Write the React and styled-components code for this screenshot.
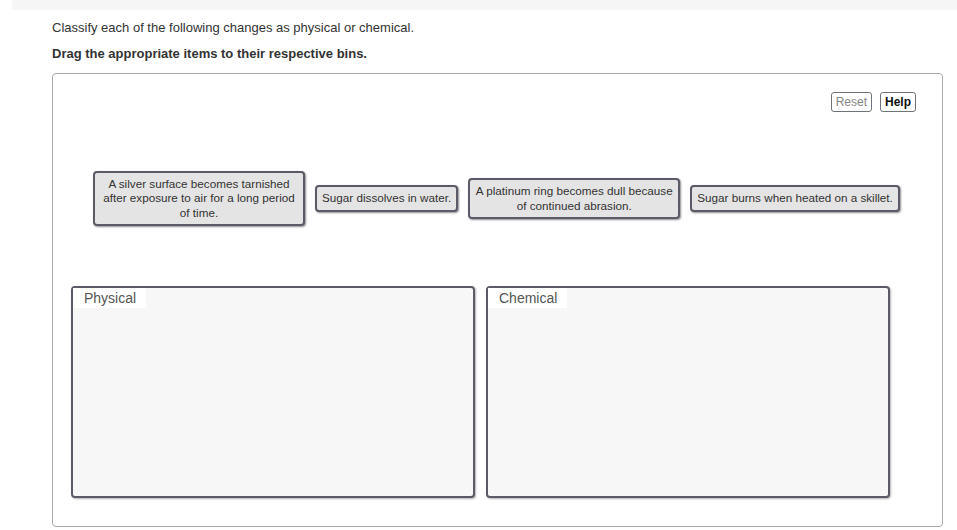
import styled, { createGlobalStyle } from "styled-components";

const GlobalStyle = createGlobalStyle`
  body {
    margin: 0;
    background: #fff;
    font-family: "Liberation Sans", Arial, sans-serif;
    color: #333;
  }
`;

const TopBar = styled.div`
  height: 10px;
  margin-left: 12px;
  background: #f6f6f6;
`;

const Content = styled.div`
  padding: 10px 14px 0 52px;
`;

const Prompt = styled.p`
  margin: 0 0 10px;
  font-size: 13px;
  line-height: 16px;
  font-weight: ${(p) => (p.$bold ? 700 : 400)};
  color: #333;
`;

const Board = styled.div`
  margin-top: 11px;
  width: 891px;
  box-sizing: border-box;
  border: 1px solid #aaa;
  border-radius: 4px;
  padding: 18px 26px 28px 18px;
`;

const ButtonBar = styled.div`
  display: flex;
  justify-content: flex-end;
  gap: 8px;
`;

const ToolButton = styled.button`
  height: 20px;
  padding: 0 4px;
  border: 1px solid #6f7478;
  border-radius: 3px;
  background: #fff;
  font-family: "Liberation Sans", Arial, sans-serif;
  font-size: 12px;
  font-weight: ${(p) => (p.$primary ? 700 : 400)};
  color: ${(p) => (p.$primary ? "#111" : "#858585")};
  cursor: pointer;
`;

const ItemTray = styled.div`
  height: 173px;
  display: flex;
  align-items: center;
  gap: 10px;
  padding-left: 22px;
`;

const Item = styled.div`
  max-width: 212px;
  box-sizing: border-box;
  padding: 4px 5px;
  border: 2px solid #5b5b68;
  border-radius: 4px;
  background: #e4e4e4;
  box-shadow: 1px 1px 2px rgba(0, 0, 0, 0.45);
  font-size: 11.7px;
  line-height: 14.5px;
  text-align: center;
  color: #333;
  cursor: move;
`;

const Bins = styled.div`
  margin-top: 1px;
  display: grid;
  grid-template-columns: 404px 404px;
  gap: 11px;
`;

const Bin = styled.div`
  height: 212px;
  box-sizing: border-box;
  border: 2px solid #5b5b68;
  border-radius: 4px;
  background: #f7f7f7;
  box-shadow: 1px 1px 2px rgba(0, 0, 0, 0.3);
`;

const BinLabel = styled.div`
  display: inline-block;
  padding: 2px 10px 2px 11px;
  background: #fff;
  font-size: 14px;
  line-height: 16px;
  color: #555;
`;

const items = [
  "A silver surface becomes tarnished after exposure to air for a long period of time.",
  "Sugar dissolves in water.",
  "A platinum ring becomes dull because of continued abrasion.",
  "Sugar burns when heated on a skillet.",
];

const bins = ["Physical", "Chemical"];

const App = () => {
  return (
    <>
      <GlobalStyle />
      <TopBar />
      <Content>
        <Prompt>Classify each of the following changes as physical or chemical.</Prompt>
        <Prompt $bold>Drag the appropriate items to their respective bins.</Prompt>
        <Board>
          <ButtonBar>
            <ToolButton>Reset</ToolButton>
            <ToolButton $primary>Help</ToolButton>
          </ButtonBar>
          <ItemTray>
            {items.map((text) => (
              <Item key={text}>{text}</Item>
            ))}
          </ItemTray>
          <Bins>
            {bins.map((name) => (
              <Bin key={name}>
                <BinLabel>{name}</BinLabel>
              </Bin>
            ))}
          </Bins>
        </Board>
      </Content>
    </>
  );
};

export default App;
